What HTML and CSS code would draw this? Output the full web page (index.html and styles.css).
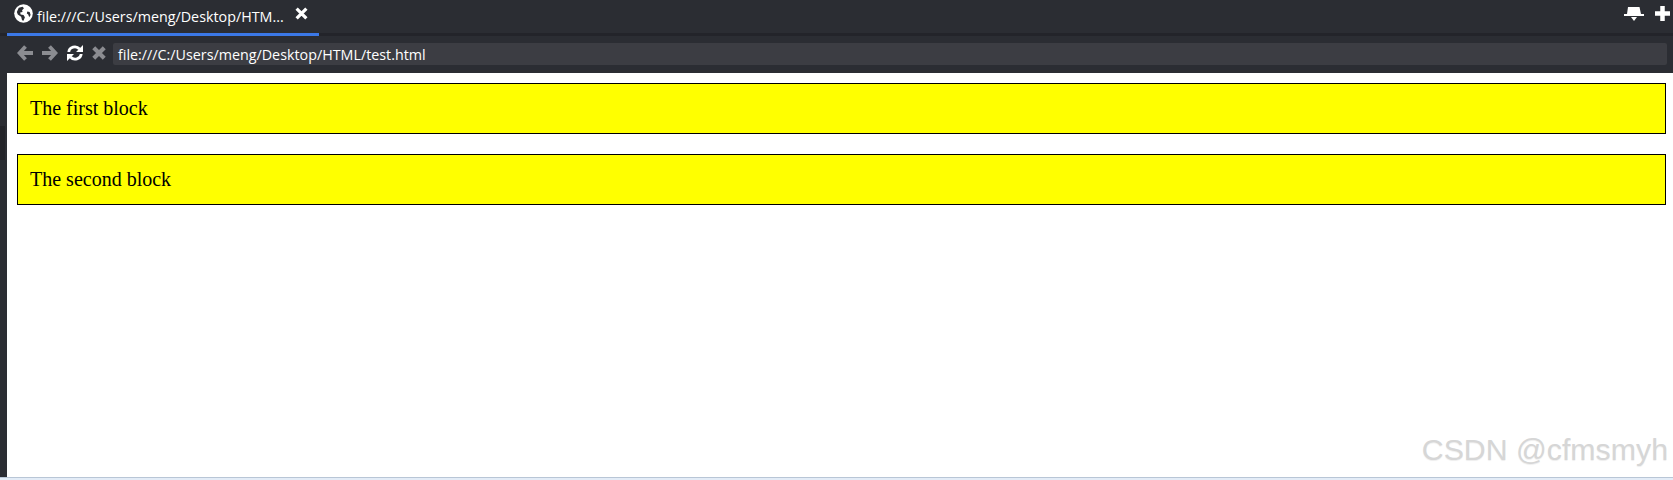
FILE: index.html
```html
<!DOCTYPE html>
<html lang="en">
<head>
    <meta charset="UTF-8">
    <title>test.html</title>
    <link rel="stylesheet" href="styles.css">
</head>
<body>
    <div class="window">
        <div class="tab-bar">
            <div class="tab">
                <svg class="globe" viewBox="0 0 20 20">
                    <circle cx="10" cy="10" r="9.800" fill="#fff"/>
                    <path fill="#2b2d33" d="M5 4 9 3 10.500 4.500 8.500 6.500 9 8.500 6.500 9 7 11 10 11.500 11.500 14 10 17.500 8.500 17 7.500 13.500 4 11 3 8.500ZM14 8 16.500 8.500 17.500 11.500 16 14 15 11 13.500 10Z"/>
                </svg>
                <span class="tab-title">file:///C:/Users/meng/Desktop/HTM...</span>
                <svg class="tab-close" viewBox="0 0 12 12">
                    <path d="M1.500 1.500 10.500 10.500M10.500 1.500 1.500 10.500" stroke="#fff" stroke-width="3"/>
                </svg>
            </div>
            <div class="tab-actions">
                <svg class="tab-list" viewBox="0 0 20 14">
                    <path fill="#fff" d="M4 0H15.500L17 7H20V9H0V7H3ZM7 10H13L10 14Z"/>
                </svg>
                <svg class="new-tab" viewBox="0 0 15 15">
                    <path d="M7.500 0V15M0 7.500H15" stroke="#fff" stroke-width="4.500"/>
                </svg>
            </div>
        </div>
        <div class="tool-bar">
            <div class="nav-icons">
                <svg class="nav-icon" viewBox="0 0 16 16">
                    <path d="M8.500 1.500 2.500 8 8.500 14.500M3 8H16" fill="none" stroke="#8b8c91" stroke-width="3.800"/>
                </svg>
                <svg class="nav-icon" viewBox="0 0 16 16">
                    <path d="M7.500 1.500 13.500 8 7.500 14.500M13 8H0" fill="none" stroke="#8b8c91" stroke-width="3.800"/>
                </svg>
                <svg class="nav-icon" viewBox="0 0 16 16">
                    <path fill="none" stroke="#fff" stroke-width="2.800" d="M1.800 7A6 5.500 0 0 1 12.500 4M14.200 9A6 5.500 0 0 1 3.500 12"/>
                    <path fill="#fff" d="M16 0V7H9ZM0 16V9H7Z"/>
                </svg>
                <svg class="nav-icon stop" viewBox="0 0 12 12">
                    <path d="M1.500 1.500 10.500 10.500M10.500 1.500 1.500 10.500" stroke="#8b8c91" stroke-width="3.600"/>
                </svg>
            </div>
            <div class="address">file:///C:/Users/meng/Desktop/HTML/test.html</div>
        </div>
        <div class="content-row">
            <div class="side-strip">
                <div class="side-mark"></div>
            </div>
            <div class="page">
                <div class="block">The first block</div>
                <div class="block">The second block</div>
            </div>
        </div>
        <div class="bottom-strip"></div>
    </div>
    <div class="watermark">CSDN @cfmsmyh</div>
</body>
</html>
```

FILE: styles.css
```css
html, body {
    margin: 0;
    height: 100%;
    overflow: hidden;
    background-color: #fff;
}

.window {
    display: flex;
    flex-direction: column;
    height: 480px;
    font-family: 'Open Sans', 'Noto Sans', sans-serif;
    color: #fff;
    background-color: #2b2d33;
}

.tab-bar {
    display: flex;
    justify-content: space-between;
    height: 36px;
    box-sizing: border-box;
    border-bottom: 3px solid #23242a;
}

.tab {
    display: flex;
    align-items: flex-start;
    width: 312px;
    height: 36px;
    margin-left: 7px;
    box-sizing: border-box;
    padding: 4px 0 0 7px;
    border-bottom: 3px solid #3b78e7;
}

.globe {
    width: 19px;
    height: 19px;
    flex-shrink: 0;
}

.tab-title {
    margin: 3px 0 0 4px;
    font-size: 14.300px;
    line-height: 20px;
    white-space: nowrap;
}

.tab-close {
    width: 13px;
    height: 13px;
    margin: 3px 0 0 11px;
}

.tab-actions {
    display: flex;
    align-items: flex-start;
    gap: 11px;
    padding: 6px 3px 0 0;
}

.tab-list {
    width: 20px;
    height: 14px;
    margin-top: 1px;
}

.new-tab {
    width: 15px;
    height: 15px;
}

.tool-bar {
    display: flex;
    align-items: center;
    height: 37px;
    box-sizing: border-box;
    padding: 0 6px 0 17px;
}

.nav-icons {
    display: flex;
    align-items: center;
    gap: 9px;
    margin: 0 7px 4px 0;
}

.nav-icon {
    width: 16px;
    height: 16px;
    flex-shrink: 0;
}

.stop {
    width: 14px;
    height: 14px;
}

.address {
    flex: 1;
    height: 22px;
    margin-bottom: 1px;
    padding-left: 5px;
    font-size: 14.300px;
    line-height: 24px;
    background-color: #3c3d43;
    border-radius: 2px;
}

.content-row {
    display: flex;
    flex: 1;
}

.side-strip {
    width: 7px;
    padding-top: 53px;
}

.side-mark {
    width: 5px;
    height: 34px;
    background-color: #232429;
}

.page {
    flex: 1;
    box-sizing: border-box;
    padding: 10px 7px 0 10px;
    background-color: #fff;
}

.block {
    height: 51px;
    box-sizing: border-box;
    margin-bottom: 20px;
    padding-left: 12px;
    border: 1px solid #000;
    font-family: 'Liberation Serif', serif;
    font-size: 20px;
    line-height: 49px;
    color: #000;
    background-color: #ff0;
}

.bottom-strip {
    height: 3px;
    border-top: 1px solid #b9c6d6;
    box-sizing: border-box;
    background-color: #e3ecf7;
}

/* watermark lies over the page */
.watermark {
    position: absolute;
    right: 5px;
    top: 433px;
    font-family: 'Liberation Sans', sans-serif;
    font-size: 30.300px;
    line-height: 34px;
    color: #d6d6d6;
    text-shadow: 0 1px 1px #eee;
}
```
